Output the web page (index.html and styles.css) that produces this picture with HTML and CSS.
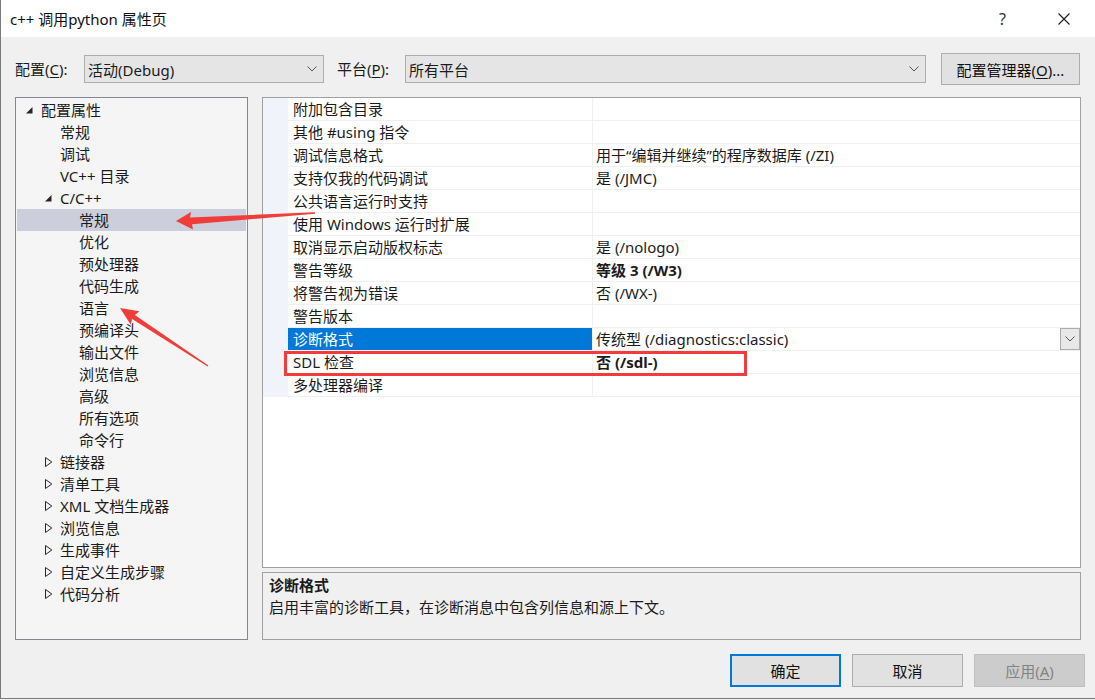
FILE: index.html
```html
<!DOCTYPE html>
<html lang="zh-CN">
<head>
<meta charset="utf-8">
<title>c++ 调用python 属性页</title>
<link rel="stylesheet" href="styles.css">
</head>
<body>
<div class="window">
  <div class="titlebar">
    <span class="title">c++ 调用python 属性页</span>
    <span class="help">?</span>
    <svg class="close" width="12" height="12" viewBox="0 0 12 12"><path d="M0.5 0.5 L11.5 11.5 M11.5 0.5 L0.5 11.5" stroke="#1a1a1a" stroke-width="1.1" fill="none"/></svg>
  </div>

  <div class="configrow">
    <span class="lbl lbl-config">配置(<u>C</u>):</span>
    <div class="combo combo-config"><span>活动(Debug)</span><svg width="10" height="6" viewBox="0 0 10 6"><path d="M0.5 0.5 L5 5 L9.5 0.5" stroke="#555" fill="none"/></svg></div>
    <span class="lbl lbl-platform">平台(<u>P</u>):</span>
    <div class="combo combo-platform"><span>所有平台</span><svg width="10" height="6" viewBox="0 0 10 6"><path d="M0.5 0.5 L5 5 L9.5 0.5" stroke="#555" fill="none"/></svg></div>
    <button class="btn btn-mgr">配置管理器(<u>O</u>)...</button>
  </div>

  <div class="main">
    <div class="tree">
      <div class="node l0"><span class="tog"><svg width="7" height="7" viewBox="0 0 7 7"><path d="M6.5 0 L6.5 6.5 L0 6.5 Z" fill="#262626"/></svg></span>配置属性</div>
      <div class="node l1"><span class="tog"></span>常规</div>
      <div class="node l1"><span class="tog"></span>调试</div>
      <div class="node l1"><span class="tog"></span>VC++ 目录</div>
      <div class="node l1"><span class="tog"><svg width="7" height="7" viewBox="0 0 7 7"><path d="M6.5 0 L6.5 6.5 L0 6.5 Z" fill="#262626"/></svg></span>C/C++</div>
      <div class="node l2 sel"><span class="tog"></span>常规</div>
      <div class="node l2"><span class="tog"></span>优化</div>
      <div class="node l2"><span class="tog"></span>预处理器</div>
      <div class="node l2"><span class="tog"></span>代码生成</div>
      <div class="node l2"><span class="tog"></span>语言</div>
      <div class="node l2"><span class="tog"></span>预编译头</div>
      <div class="node l2"><span class="tog"></span>输出文件</div>
      <div class="node l2"><span class="tog"></span>浏览信息</div>
      <div class="node l2"><span class="tog"></span>高级</div>
      <div class="node l2"><span class="tog"></span>所有选项</div>
      <div class="node l2"><span class="tog"></span>命令行</div>
      <div class="node l1"><span class="tog"><svg class="col" width="8" height="10" viewBox="0 0 8 10"><path d="M0.5 0.5 L6.8 5 L0.5 9.5 Z" stroke="#262626" fill="none"/></svg></span>链接器</div>
      <div class="node l1"><span class="tog"><svg class="col" width="8" height="10" viewBox="0 0 8 10"><path d="M0.5 0.5 L6.8 5 L0.5 9.5 Z" stroke="#262626" fill="none"/></svg></span>清单工具</div>
      <div class="node l1"><span class="tog"><svg class="col" width="8" height="10" viewBox="0 0 8 10"><path d="M0.5 0.5 L6.8 5 L0.5 9.5 Z" stroke="#262626" fill="none"/></svg></span>XML 文档生成器</div>
      <div class="node l1"><span class="tog"><svg class="col" width="8" height="10" viewBox="0 0 8 10"><path d="M0.5 0.5 L6.8 5 L0.5 9.5 Z" stroke="#262626" fill="none"/></svg></span>浏览信息</div>
      <div class="node l1"><span class="tog"><svg class="col" width="8" height="10" viewBox="0 0 8 10"><path d="M0.5 0.5 L6.8 5 L0.5 9.5 Z" stroke="#262626" fill="none"/></svg></span>生成事件</div>
      <div class="node l1"><span class="tog"><svg class="col" width="8" height="10" viewBox="0 0 8 10"><path d="M0.5 0.5 L6.8 5 L0.5 9.5 Z" stroke="#262626" fill="none"/></svg></span>自定义生成步骤</div>
      <div class="node l1"><span class="tog"><svg class="col" width="8" height="10" viewBox="0 0 8 10"><path d="M0.5 0.5 L6.8 5 L0.5 9.5 Z" stroke="#262626" fill="none"/></svg></span>代码分析</div>
    </div>

    <div class="right">
      <div class="grid">
        <div class="row"><span class="gut"></span><span class="name">附加包含目录</span><span class="val"></span></div>
        <div class="row"><span class="gut"></span><span class="name">其他 #using 指令</span><span class="val"></span></div>
        <div class="row"><span class="gut"></span><span class="name">调试信息格式</span><span class="val">用于“编辑并继续”的程序数据库 (/ZI)</span></div>
        <div class="row"><span class="gut"></span><span class="name">支持仅我的代码调试</span><span class="val">是 (/JMC)</span></div>
        <div class="row"><span class="gut"></span><span class="name">公共语言运行时支持</span><span class="val"></span></div>
        <div class="row"><span class="gut"></span><span class="name">使用 Windows 运行时扩展</span><span class="val"></span></div>
        <div class="row"><span class="gut"></span><span class="name">取消显示启动版权标志</span><span class="val">是 (/nologo)</span></div>
        <div class="row"><span class="gut"></span><span class="name">警告等级</span><span class="val bold">等级 3 (/W3)</span></div>
        <div class="row"><span class="gut"></span><span class="name">将警告视为错误</span><span class="val">否 (/WX-)</span></div>
        <div class="row"><span class="gut"></span><span class="name">警告版本</span><span class="val"></span></div>
        <div class="row"><span class="gut"></span><span class="name selname">诊断格式</span><span class="val has-drop">传统型 (/diagnostics:classic)<span class="drop"><svg width="10" height="6" viewBox="0 0 10 6"><path d="M0.5 0.5 L5 5 L9.5 0.5" stroke="#555" fill="none"/></svg></span></span></div>
        <div class="row"><span class="gut"></span><span class="name">SDL 检查</span><span class="val bold">否 (/sdl-)</span></div>
        <div class="row"><span class="gut"></span><span class="name">多处理器编译</span><span class="val"></span></div>
      </div>
      <div class="desc">
        <div class="desc-title">诊断格式</div>
        <div class="desc-text">启用丰富的诊断工具，在诊断消息中包含列信息和源上下文。</div>
      </div>
    </div>
  </div>

  <div class="footer">
    <button class="btn btn-ok">确定</button>
    <button class="btn">取消</button>
    <button class="btn btn-disabled">应用(<u>A</u>)</button>
  </div>

  <div class="redbox"></div>
  <svg class="arrows" width="1095" height="700" viewBox="0 0 1095 700">
    <polygon points="176,221 191,212 190,217.6 315,212.2 315,213.8 192,224.2 193,229.5" fill="#ef3e3a"/>
    <polygon points="120,308 139.4,311.2 134.9,314.9 208.4,365.4 207.6,366.6 132.1,319.1 130.6,324.6" fill="#ef3e3a"/>
  </svg>
</div>
</body>
</html>
```

FILE: styles.css
```css
* { box-sizing: border-box; }
html, body { margin: 0; padding: 0; }
body {
  width: 1095px;
  height: 700px;
  overflow: hidden;
  background: #f0f0f0;
  font-family: "Noto Sans", "Noto Sans CJK SC", sans-serif;
  font-size: 15px;
  color: #1b1b1b;
}
u { text-decoration: underline; text-underline-offset: 2px; }

.window {
  position: relative;
  width: 1095px;
  height: 699px;
  background: #f0f0f0;
  border-left: 1px solid #7a7a7a;
  border-bottom: 1px solid #7a7a7a;
}

.titlebar {
  height: 37px;
  background: #ffffff;
  display: flex;
  align-items: center;
  padding-left: 9px;
}
.title { font-size: 15px; color: #111; }
.help { margin-left: auto; font-size: 16px; color: #333; width: 12px; }
.close { margin-left: 47px; margin-right: 25px; }

.configrow {
  display: flex;
  align-items: center;
  height: 32px;
  margin-top: 16px;
  padding-left: 14px;
}
.lbl { line-height: 20px; white-space: nowrap; }
.lbl-config { width: 69px; }
.lbl-platform { width: 68px; margin-left: 13px; }
.combo {
  height: 28px;
  display: flex;
  align-items: center;
  justify-content: space-between;
  background: #e5e5e5;
  border: 1px solid #adadad;
  padding: 0 6px 0 3px;
}
.combo-config { width: 240px; }
.combo-platform { width: 521px; }

.btn {
  font-family: inherit;
  font-size: 15px;
  color: #111;
  background: #e1e1e1;
  border: 1px solid #adadad;
  padding: 0;
  height: 33px;
  width: 111px;
}
.btn-mgr { width: 139px; height: 32px; margin-left: 15px; }

.main {
  display: flex;
  gap: 14px;
  margin-top: 12px;
  padding-left: 14px;
}
.tree {
  width: 233px;
  height: 543px;
  background: #f5f5f5;
  border: 1px solid #828790;
  padding: 1px 1px 0 1px;
}
.node {
  height: 22px;
  line-height: 22px;
  display: flex;
  align-items: center;
  white-space: nowrap;
}
.node.l0 { padding-left: 5px; }
.node.l1 { padding-left: 24px; }
.node.l2 { padding-left: 43px; }
.node.sel { background: #cccedb; }
.tog {
  width: 19px;
  height: 22px;
  display: flex;
  align-items: center;
  padding-left: 4px;
}
.tog svg { display: block; margin-top: 1px; }
.tog svg.col { margin-top: 0; }

.right {
  width: 819px;
  display: flex;
  flex-direction: column;
  gap: 4px;
}
.grid {
  height: 471px;
  background: #ffffff;
  border: 1px solid #a0a0a0;
}
.row {
  display: grid;
  grid-template-columns: 25px 305px 1fr;
  height: 23px;
}
.gut { background: #f0f3f9; }
.name, .val {
  line-height: 22px;
  height: 23px;
  border-bottom: 1px solid #f0f0f0;
  white-space: nowrap;
}
.name { padding-left: 5px; border-right: 1px solid #f0f0f0; }
.val { padding-left: 3px; position: relative; }
.bold { font-weight: bold; }
.selname { background: #0078d7; color: #ffffff; }
.drop {
  position: absolute;
  right: 0;
  top: 0;
  width: 20px;
  height: 22px;
  background: #e8e8e8;
  border: 1px solid #acacac;
  display: flex;
  align-items: center;
  justify-content: center;
}

.desc {
  height: 68px;
  border: 1px solid #a0a0a0;
  background: #f0f0f0;
  padding: 1px 6px;
}
.desc-title { font-weight: bold; line-height: 22px; }
.desc-text { line-height: 22px; }

.footer {
  display: flex;
  justify-content: flex-end;
  gap: 11px;
  margin-top: 14px;
  padding-right: 10px;
}
.btn-ok { border: 2px solid #0078d7; }
.btn-disabled { background: #cccccc; border-color: #bfbfbf; color: #838383; }

.redbox {
  position: absolute;
  left: 283px;
  top: 351px;
  width: 463px;
  height: 25px;
  border: 3px solid #f03c3c;
}
.arrows {
  position: absolute;
  left: -1px;
  top: 0;
  pointer-events: none;
}
```
